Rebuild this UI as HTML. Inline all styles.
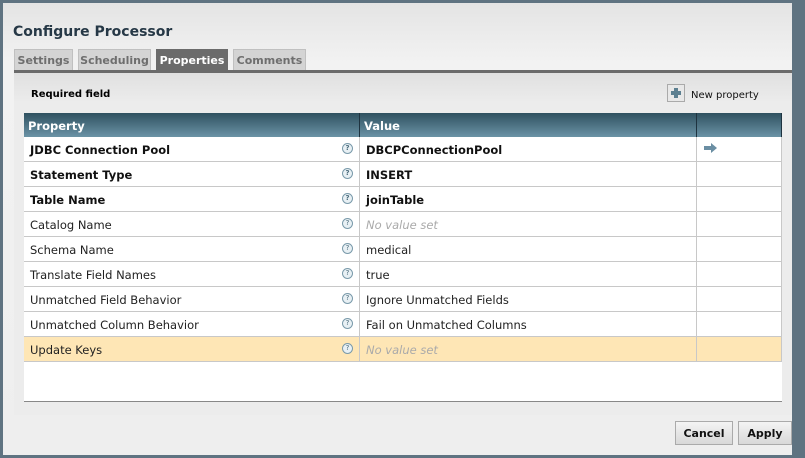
<!DOCTYPE html>
<html><head><style>
body{margin:0;width:805px;height:458px;background:#5f7381;font-family:"DejaVu Sans","Liberation Sans",sans-serif;overflow:hidden;position:relative}
.dlg{position:absolute;left:3px;top:3px;width:789px;height:452px;background:linear-gradient(#e4e4e4,#f2f2f2 60px,#eeeeee);}
.title{position:absolute;left:10px;top:21px;font-size:14px;font-weight:bold;color:#263846}
.tab{position:absolute;top:46px;height:21px;line-height:22px;font-size:11px;font-weight:bold;color:#6e6e6e;background:#d4d4d4;border:1px solid #c0c0c0;border-bottom:none;text-align:center;box-sizing:border-box}
.tab.on{background:#6b6b6b;color:#fff;border-color:#6b6b6b}
.bar{position:absolute;left:11px;top:67px;width:778px;height:3px;background:#6b6b6b}
.panel{position:absolute;left:11px;top:70px;width:778px;height:342px;background:linear-gradient(#e0e0e0,#ececec 30px)}
.req{position:absolute;left:17px;top:16px;font-size:10px;font-weight:bold;color:#000}
.np{position:absolute;left:653px;top:11px;width:18px;height:18px;border:1px solid #aaa;background:#e8e8e8;box-sizing:border-box}
.npt{position:absolute;left:677px;top:17px;font-size:10px;color:#111}
table{position:absolute;left:10px;top:40px;width:758px;border-collapse:collapse;background:#fff;font-size:11.5px}
th{height:23px;padding:1px 4px 0;background:linear-gradient(#2f5160,#6b93a6);color:#fff;text-align:left;font-size:11.5px;border-right:1px solid #1e3340}
td{height:22px;border-bottom:1px solid #c8c8c8;border-right:1px solid #c8c8c8;padding:2px 6px 0;color:#222;position:relative}
td.b{font-weight:bold;color:#111}
.q{position:absolute;right:6px;top:6px;width:9px;height:9px;border:1px solid #7a9aaa;border-radius:50%;font-size:7px;line-height:9px;text-align:center;color:#4b6b7b;background:#e8f0f4}
.nv{color:#aaa;font-style:italic}
tr.hl td{background:#fee6b5}
.btn{position:absolute;top:418px;height:24px;line-height:24px;border:1px solid #aaa;background:linear-gradient(#f4f4f4,#d8d8d8);font-size:11px;font-weight:bold;text-align:center;box-sizing:border-box;color:#111}
</style></head><body>
<div class="dlg">
<div class="title">Configure Processor</div>
<div class="tab" style="left:11px;width:59px">Settings</div>
<div class="tab" style="left:75px;width:73px">Scheduling</div>
<div class="tab on" style="left:153px;width:72px">Properties</div>
<div class="tab" style="left:230px;width:73px">Comments</div>
<div class="bar"></div>
<div class="panel">
<div class="req">Required field</div>
<div class="np"><svg width="16" height="16"><path d="M6 3h4v3h3v4h-3v3H6v-3H3V6h3z" fill="#5c7f90"/></svg></div>
<div class="npt">New property</div>
<table>
<tr><th style="width:327px">Property</th><th style="width:328px">Value</th><th></th></tr>
<tr><td class="b">JDBC Connection Pool<span class="q">?</span></td><td class="b">DBCPConnectionPool</td><td><svg width="14" height="10" style="position:absolute;left:7px;top:6px"><path d="M0 3h7V0l6 5-6 5V7H0z" fill="#6a8ea3"/></svg></td></tr>
<tr><td class="b">Statement Type<span class="q">?</span></td><td class="b">INSERT</td><td></td></tr>
<tr><td class="b">Table Name<span class="q">?</span></td><td class="b">joinTable</td><td></td></tr>
<tr><td>Catalog Name<span class="q">?</span></td><td class="nv">No value set</td><td></td></tr>
<tr><td>Schema Name<span class="q">?</span></td><td>medical</td><td></td></tr>
<tr><td>Translate Field Names<span class="q">?</span></td><td>true</td><td></td></tr>
<tr><td>Unmatched Field Behavior<span class="q">?</span></td><td>Ignore Unmatched Fields</td><td></td></tr>
<tr><td>Unmatched Column Behavior<span class="q">?</span></td><td>Fail on Unmatched Columns</td><td></td></tr>
<tr class="hl"><td>Update Keys<span class="q">?</span></td><td class="nv">No value set</td><td></td></tr>
<tr><td colspan="3" style="height:39px;padding:0;border-right:none;border-bottom:1px solid #888"></td></tr>
</table>
</div>
<div class="btn" style="left:672px;width:58px">Cancel</div>
<div class="btn" style="left:735px;width:54px">Apply</div>
</div>
</body></html>
